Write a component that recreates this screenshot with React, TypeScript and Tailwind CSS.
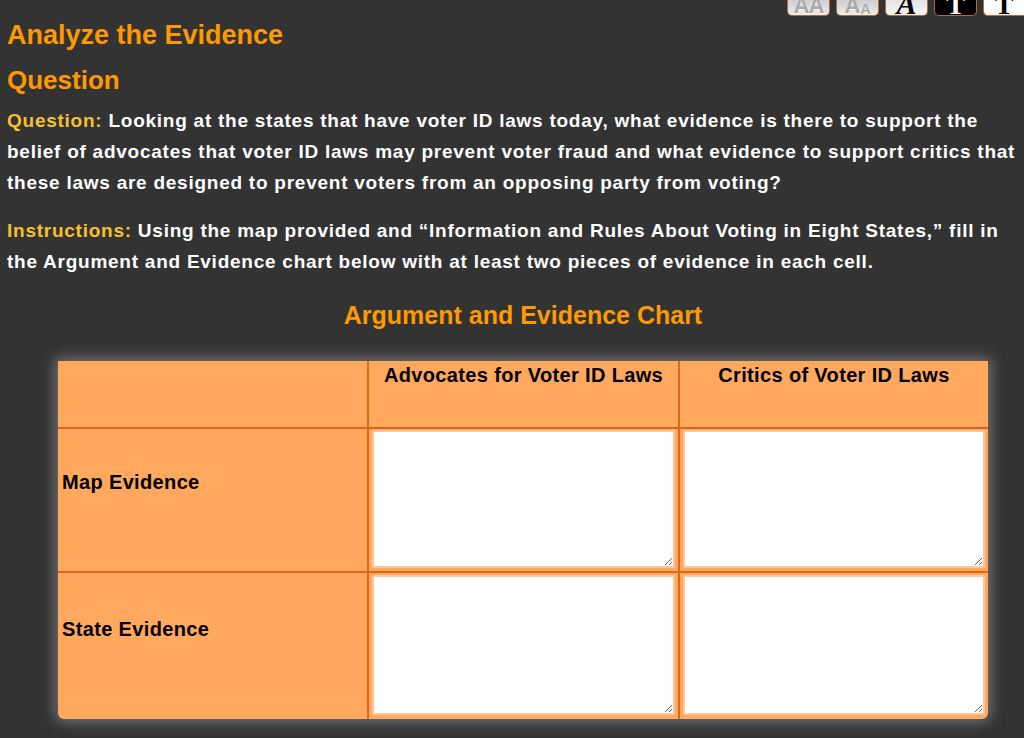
import React from 'react';

function FontButtons() {
  return (
    <div className="flex h-[16px] justify-end gap-[6px] overflow-hidden">
      {/* smaller / default text size */}
      <div className="flex h-[16px] w-[43px] items-end justify-center overflow-hidden rounded-b-[5px] border border-t-0 border-[#b8692e] bg-gradient-to-b from-[#cfcfcf] to-[#ececec]">
        <span className="font-['Liberation_Sans',Arial,sans-serif] text-[22px] leading-[18px] font-bold tracking-[-1px] text-[#a9a9a9] [text-shadow:0_1px_0_#fff]">AA</span>
      </div>
      <div className="flex h-[16px] w-[43px] items-end justify-center overflow-hidden rounded-b-[5px] border border-t-0 border-[#b8692e] bg-gradient-to-b from-[#cfcfcf] to-[#ececec]">
        <span className="font-['Liberation_Sans',Arial,sans-serif] text-[22px] leading-[18px] font-bold text-[#a9a9a9] [text-shadow:0_1px_0_#fff]">A</span>
        <span className="font-['Liberation_Sans',Arial,sans-serif] text-[14px] leading-[12px] font-bold text-[#a9a9a9] [text-shadow:0_1px_0_#fff]">A</span>
      </div>
      {/* font style */}
      <div className="flex h-[16px] w-[43px] items-end justify-center overflow-hidden rounded-b-[5px] border border-t-0 border-[#b8692e] bg-gradient-to-b from-[#e4e4e4] to-[#f6f6f6]">
        <span className="font-['Liberation_Serif',serif] text-[30px] leading-[22px] font-bold italic text-black">A</span>
      </div>
      {/* contrast */}
      <div className="flex h-[16px] w-[43px] items-end justify-center overflow-hidden rounded-b-[5px] border border-t-0 border-[#b8692e] bg-black">
        <span className="font-['Liberation_Serif',serif] text-[28px] leading-[20px] font-bold text-white">T</span>
      </div>
      <div className="flex h-[16px] w-[41px] items-end justify-center overflow-hidden rounded-bl-[5px] border border-t-0 border-r-0 border-[#b8692e] bg-white">
        <span className="font-['Liberation_Serif',serif] text-[28px] leading-[20px] font-bold text-black">T</span>
      </div>
    </div>
  );
}

function AnswerBox({ last }: { last?: boolean }) {
  return (
    <div className={last ? 'border-l-2 border-[#e0661c] p-[2px_3px_4px_3px]' : 'border-b-2 border-l-2 border-[#e0661c] p-[1px_3px_3px_3px]'}>
      <textarea className="block h-full w-full resize border-2 border-[#ffc797] bg-white outline-none" />
    </div>
  );
}

export default function App() {
  return (
    <div className="min-h-[738px] bg-[#333333] font-['Liberation_Sans',Arial,sans-serif] font-bold">
      <FontButtons />

      <div className="pl-[7px]">
        <h1 className="mt-[4px] text-[27px] leading-[31px] text-[#ff9900]">Analyze the Evidence</h1>
        <h2 className="mt-[14px] text-[26px] leading-[30px] text-[#ff9900]">Question</h2>

        <p className="mt-[10px] text-[19px] leading-[31px] tracking-[0.75px] text-white">
          <span className="text-[#f7c12d]">Question:</span> Looking at the states that have voter ID laws today, what
          evidence is there to support the belief of advocates that voter ID laws may prevent voter fraud and what
          evidence to support critics that these laws are designed to prevent voters from an opposing party from
          voting?
        </p>

        <p className="mt-[17px] text-[19px] leading-[31px] tracking-[0.75px] text-white">
          <span className="text-[#f7c12d]">Instructions:</span> Using the map provided and &ldquo;Information and Rules
          About Voting in Eight States,&rdquo; fill in the Argument and Evidence chart below with at least two pieces of
          evidence in each cell.
        </p>
      </div>

      <div className="ml-[58px] w-[930px]">
        <h3 className="mt-[23px] text-center text-[25px] leading-[30px] text-[#ff9900]">Argument and Evidence Chart</h3>

        <div className="mt-[31px] grid grid-cols-[309px_311px_310px] grid-rows-[68px_144px_146px] rounded-b-[6px] bg-[#ffa85e] text-[20px] tracking-[0.35px] text-black shadow-[0_0_14px_3px_rgba(170,170,170,0.55)]">
          {/* header row */}
          <div className="border-b-2 border-[#e0661c]" />
          <div className="border-b-2 border-l-2 border-[#e0661c] pt-[4px] text-center leading-[21px]">Advocates for Voter ID Laws</div>
          <div className="border-b-2 border-l-2 border-[#e0661c] pt-[4px] text-center leading-[21px]">Critics of Voter ID Laws</div>

          {/* map evidence */}
          <div className="flex items-center border-b-2 border-[#e0661c] pb-[36px] pl-[4px]">Map Evidence</div>
          <AnswerBox />
          <AnswerBox />

          {/* state evidence */}
          <div className="flex items-center pb-[34px] pl-[4px]">State Evidence</div>
          <AnswerBox last />
          <AnswerBox last />
        </div>
      </div>
    </div>
  );
}
